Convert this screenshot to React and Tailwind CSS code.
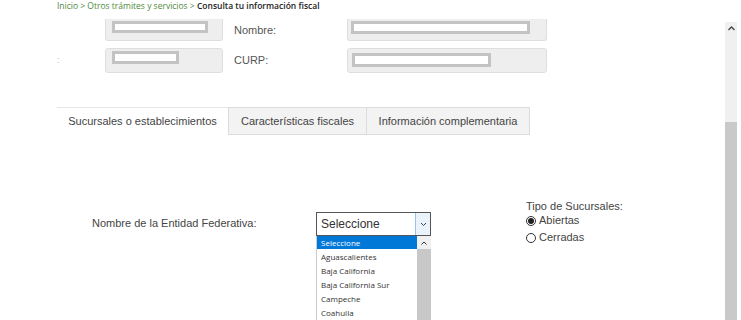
import React from "react";

function Box({ w, barW, h = "h-[25px]" }) {
  return (
    <div className={`${w} ${h} bg-[#eeeeee] border border-[#dedede] rounded-[3px] flex items-start pt-[2px] pl-[6px]`}>
      <div className={`${barW} h-[13px] border-[3px] border-[#c3c3c3] bg-white`} />
    </div>
  );
}

export default function App() {
  const items = ["Aguascalientes", "Baja California", "Baja California Sur", "Campeche", "Coahuila"];
  return (
    <div className="w-[741px] h-[320px] overflow-hidden bg-white flex" style={{ fontFamily: '"Liberation Sans", Arial, sans-serif' }}>
      <div className="w-[725px] flex flex-col">
        {/* breadcrumb */}
        <div className="pl-[57px] pt-[0px] h-[12px] text-[8.5px] leading-[11px] text-[#4f8a3c]" style={{ fontFamily: '"Open Sans", sans-serif' }}>
          Inicio &gt; Otros trámites y servicios &gt; <span className="text-[#222] font-semibold">Consulta tu información fiscal</span>
        </div>
        {/* form rows */}
        <div className="flex flex-col gap-[7px] mt-[7px]">
          <div className="flex items-center h-[22px] overflow-hidden">
            <div className="w-[105px]" />
            <div className="h-[22px] overflow-hidden flex items-end">
              <div className="w-[118px] h-[22px] bg-[#eeeeee] border-b border-x border-[#dedede] rounded-b-[3px] pl-[6px] pt-[2px]">
                <div className="w-[96px] h-[12px] border-[3px] border-[#c3c3c3] bg-white" />
              </div>
            </div>
            <div className="w-[124px] pl-[11px] text-[11px] text-[#555]">Nombre:</div>
            <div className="w-[200px] h-[22px] bg-[#eeeeee] border-b border-x border-[#dedede] rounded-b-[3px] pl-[3px] pt-[2px]">
              <div className="w-[179px] h-[13px] border-[3px] border-[#c3c3c3] bg-white" />
            </div>
          </div>
          <div className="flex items-center">
            <div className="w-[105px] pl-[57px] text-[9px] text-[#bbb]">:</div>
            <Box w="w-[118px]" barW="w-[67px]" />
            <div className="w-[124px] pl-[11px] text-[11px] text-[#555]">CURP:</div>
            <div className="w-[200px] h-[25px] bg-[#eeeeee] border border-[#dedede] rounded-[3px] pl-[4px] pt-[4px]">
              <div className="w-[139px] h-[14px] border-[3px] border-[#c3c3c3] bg-white" />
            </div>
          </div>
        </div>
        {/* tabs */}
        <div className="flex ml-[57px] mt-[34px] h-[28px] text-[11px] text-[#444]">
          <div className="w-[171px] border-t border-[#e6e6e6] flex items-center justify-center">Sucursales o establecimientos</div>
          <div className="w-[139px] bg-[#f3f3f3] border border-[#dcdcdc] flex items-center justify-center">Características fiscales</div>
          <div className="w-[163px] bg-[#f3f3f3] border-y border-r border-[#dcdcdc] flex items-center justify-center">Información complementaria</div>
        </div>
        {/* entidad section */}
        <div className="flex mt-[66px]">
          <div className="w-[316px] pl-[92px] pt-[14px] text-[11px] text-[#444]">Nombre de la Entidad Federativa:</div>
          <div className="relative w-[115px] h-[24px] mt-[11px]">
            <div className="w-[115px] h-[24px] border border-[#555] flex bg-white">
              <div className="flex-1 pl-[4px] text-[12px] leading-[22px] text-[#333]">Seleccione</div>
              <div className="w-[15px] h-full border-l border-[#9cc2e5] bg-[#eaf3fb] flex items-center justify-center">
                <svg width="7" height="5" viewBox="0 0 7 5"><path d="M1 1 L3.5 3.5 L6 1" fill="none" stroke="#444" strokeWidth="1" /></svg>
              </div>
            </div>
            <div className="absolute left-0 top-[24px] w-[115px] h-[100px] bg-white border-l border-[#ccc] flex" style={{ fontFamily: '"Open Sans", sans-serif' }}>
              <div className="flex-1 flex flex-col text-[8px] text-[#333]">
                <div className="h-[13px] bg-[#0078d7] text-white pl-[4px] leading-[13px]">Seleccione</div>
                {items.map((t) => (
                  <div key={t} className="h-[14px] pl-[4px] leading-[14px] pt-[1px]">{t}</div>
                ))}
              </div>
              <div className="w-[14px] flex flex-col">
                <div className="h-[13px] bg-[#f0f0f0] flex items-center justify-center">
                  <svg width="6" height="4" viewBox="0 0 6 4"><path d="M0.5 3.5 L3 1 L5.5 3.5" fill="none" stroke="#333" strokeWidth="1" /></svg>
                </div>
                <div className="flex-1 bg-[#c8c8c8]" />
              </div>
            </div>
          </div>
          <div className="ml-[95px] -mt-[1px] flex flex-col text-[11px] text-[#444]">
            <div className="leading-[13px]">Tipo de Sucursales:</div>
            <label className="flex items-center gap-[3px] h-[15px]">
              <span className="w-[10px] h-[10px] rounded-full border border-[#333] flex items-center justify-center">
                <span className="w-[6px] h-[6px] rounded-full bg-[#222]" />
              </span>
              <span>Abiertas</span>
            </label>
            <label className="flex items-center gap-[3px] h-[15px] mt-[2px]">
              <span className="w-[10px] h-[10px] rounded-full border border-[#333]" />
              <span>Cerradas</span>
            </label>
          </div>
        </div>
      </div>
      {/* page scrollbar */}
      <div className="w-[12px] pt-[22px] flex flex-col">
        <div className="h-[100px] bg-[#f0f0f0] flex justify-center pt-[4px]">
          <svg width="7" height="5" viewBox="0 0 7 5"><path d="M0.5 4 L3.5 1 L6.5 4" fill="none" stroke="#444" strokeWidth="1.3" /></svg>
        </div>
        <div className="flex-1 bg-[#c9c9c9]" />
      </div>
    </div>
  );
}
